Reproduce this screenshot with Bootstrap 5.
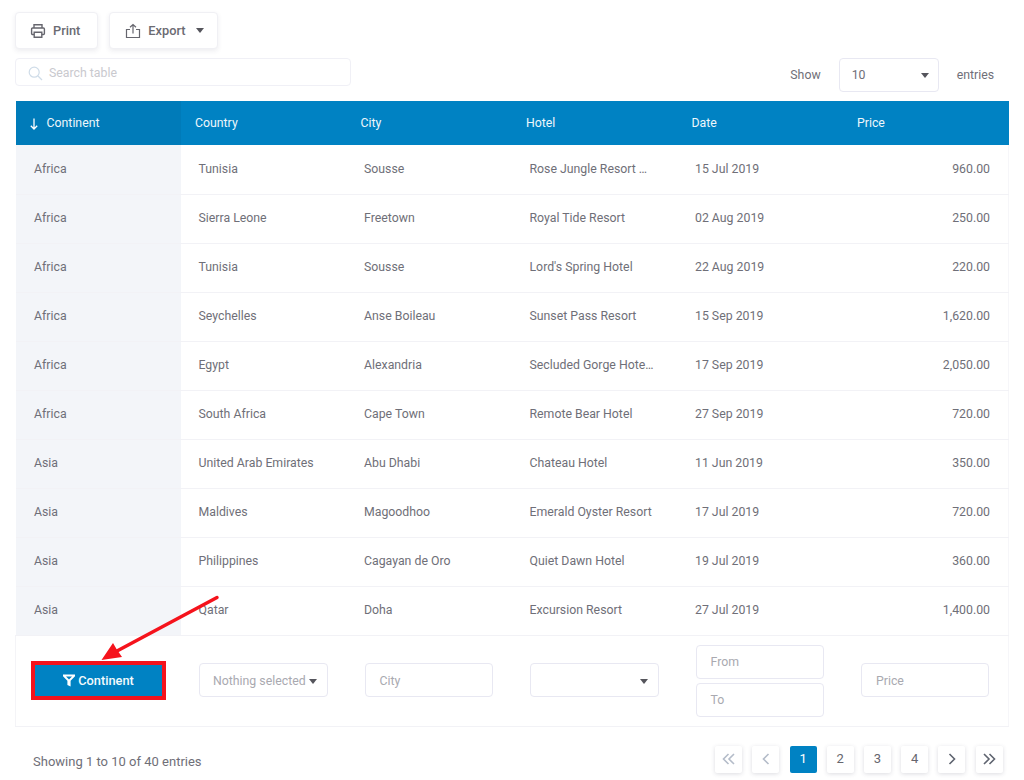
<!DOCTYPE html>
<html lang="en">
<head>
<meta charset="utf-8">
<title>Hotels</title>
<link href="https://cdn.jsdelivr.net/npm/bootstrap@5.3.0/dist/css/bootstrap.min.css" rel="stylesheet">
<style>
html,body{height:780px;overflow:hidden}
body{font-family:Roboto,"Liberation Sans",sans-serif;font-size:12.3px;color:#6f6f78;background:#fff;position:relative}
.page-wrap{padding:12px 15px 0}
.tool-row{gap:11px;height:37px}
.tool-btn{height:37px;background:#fff;border:1px solid #f0f0f4;border-radius:4px;box-shadow:0 2px 5px rgba(60,60,90,.09);color:#6b6b72;font-weight:500;font-size:12.8px;padding:0 17px 0 14px;gap:7px}
.tool-export{padding:0 13px 0 15px}
.caret-mark{width:0;height:0;border-left:4.5px solid transparent;border-right:4.5px solid transparent;border-top:5px solid #55555c}
.caret-gap{margin-left:3px}
.search-row{height:43px;margin-top:9px}
.search-box{width:336px;height:28px;border:1px solid #f0f0f6;border-radius:4px;padding:2px 0 0 12px;gap:6px;color:#c9c9ce}
.len-wrap{padding-right:15px;gap:18px}
.len-select{width:100px;height:34px;border:1px solid #e8e8f2;border-radius:4px;padding:0 9px 0 12px;color:#6f6f78}
.grid-table{width:994px;table-layout:fixed;border-collapse:collapse;margin:0}
.grid-table th{height:44px;background:#0082c3;color:#eef7fc;font-weight:400;padding:0 0 0 14px;border:0;vertical-align:middle}
.grid-table th.sorted-col{background:#007bb9}
.sort-arrow{margin-right:6px}
.grid-table td{height:49px;padding:0 18px 0 17.500px;border-bottom:1px solid #f2f2f6;vertical-align:middle;color:#6f6f78;white-space:nowrap;background:#fff}
.grid-table td.sorted-cell{background:#f3f5f9;padding-left:18.500px}
.grid-table td:last-child{border-right:1px solid #f6f6f9}
.grid-table tfoot td{height:91px;border-bottom:1px solid #f2f2f6;padding:0 19px 0 18px}
.grid-table tfoot td:first-child{border-left:1px solid #f4f4f7}
.flt-input{height:34px;border:1px solid #e8e8f2;border-radius:4px;padding:1px 14px 0;color:#a9a9b0;background:#fff}
.flt-single{margin-top:-1px;padding-top:2px}
.flt-pick{padding:2px 10px 0 13px}
.flt-stack{gap:4px}
.flt-btn{height:31px;width:127px;background:#0082c3;color:#f3fafd;font-weight:500;font-size:12.8px;gap:3px;outline:4px solid #f5131c;margin-left:1px}
.pager-row{padding:19px 0 0 18px;height:54px}
.pager-note{font-size:13px;padding-top:6px}
.pg-item{width:27px;height:27px;background:#fff;border-radius:2px;box-shadow:0 1px 4px rgba(60,60,90,.18);color:#66666e;font-size:13px}
.pg-item.is-active{background:#0082c3;color:#fff;box-shadow:none}
.pg-set{gap:10.200px;padding-right:6.500px}
.callout-arrow{position:absolute;left:95px;top:594px;pointer-events:none}
</style>
</head>
<body>
<div class="page-wrap">
  <div class="d-flex tool-row">
    <div class="tool-btn d-flex align-items-center">
      <svg width="16" height="16" viewBox="0 0 16 16" fill="none" stroke="#66666e" stroke-width="1.4"><path d="M4 5V1.7h8V5M4 11.5H2.6a1 1 0 0 1-1-1V6a1 1 0 0 1 1-1h10.800a1 1 0 0 1 1 1v4.500a1 1 0 0 1-1 1H12"/><path d="M4.200 9.200h7.600v5H4.200z"/></svg>
      <span>Print</span>
    </div>
    <div class="tool-btn tool-export d-flex align-items-center">
      <svg width="16" height="16" viewBox="0 0 16 16" fill="none" stroke="#66666e" stroke-width="1.2"><path d="M8 10.500V1.500M5 4.300 8 1.500l3 2.800M5 6.500H1.500v8h13v-8H11"/></svg>
      <span>Export</span>
      <span class="caret-mark caret-gap"></span>
    </div>
  </div>
  <div class="d-flex justify-content-between search-row">
    <div class="search-box d-flex align-items-center">
      <svg width="15" height="15" viewBox="0 0 15 15" fill="none" stroke="#cfdce8" stroke-width="1.200"><circle cx="6.200" cy="6.200" r="5"/><path d="m10 10 4 4"/></svg>
      <span>Search table</span>
    </div>
    <div class="len-wrap d-flex align-items-start">
      <span class="mt-2">Show</span>
      <div class="len-select d-flex align-items-center justify-content-between"><span>10</span><span class="caret-mark"></span></div>
      <span class="mt-2">entries</span>
    </div>
  </div>
  <table class="grid-table">
    <thead>
      <tr>
        <th class="sorted-col"><svg class="sort-arrow" width="8" height="12" viewBox="0 0 8 12" fill="none" stroke="#fff" stroke-width="1.300"><path d="M4 .5v10.500M.8 7.800 4 11l3.200-3.200"/></svg> Continent</th>
        <th>Country</th><th>City</th><th>Hotel</th><th>Date</th><th>Price</th>
      </tr>
    </thead>
    <tbody>
      <tr><td class="sorted-cell">Africa</td><td>Tunisia</td><td>Sousse</td><td>Rose Jungle Resort …</td><td>15 Jul 2019</td><td class="text-end">960.00</td></tr>
      <tr><td class="sorted-cell">Africa</td><td>Sierra Leone</td><td>Freetown</td><td>Royal Tide Resort</td><td>02 Aug 2019</td><td class="text-end">250.00</td></tr>
      <tr><td class="sorted-cell">Africa</td><td>Tunisia</td><td>Sousse</td><td>Lord's Spring Hotel</td><td>22 Aug 2019</td><td class="text-end">220.00</td></tr>
      <tr><td class="sorted-cell">Africa</td><td>Seychelles</td><td>Anse Boileau</td><td>Sunset Pass Resort</td><td>15 Sep 2019</td><td class="text-end">1,620.00</td></tr>
      <tr><td class="sorted-cell">Africa</td><td>Egypt</td><td>Alexandria</td><td>Secluded Gorge Hote…</td><td>17 Sep 2019</td><td class="text-end">2,050.00</td></tr>
      <tr><td class="sorted-cell">Africa</td><td>South Africa</td><td>Cape Town</td><td>Remote Bear Hotel</td><td>27 Sep 2019</td><td class="text-end">720.00</td></tr>
      <tr><td class="sorted-cell">Asia</td><td>United Arab Emirates</td><td>Abu Dhabi</td><td>Chateau Hotel</td><td>11 Jun 2019</td><td class="text-end">350.00</td></tr>
      <tr><td class="sorted-cell">Asia</td><td>Maldives</td><td>Magoodhoo</td><td>Emerald Oyster Resort</td><td>17 Jul 2019</td><td class="text-end">720.00</td></tr>
      <tr><td class="sorted-cell">Asia</td><td>Philippines</td><td>Cagayan de Oro</td><td>Quiet Dawn Hotel</td><td>19 Jul 2019</td><td class="text-end">360.00</td></tr>
      <tr><td class="sorted-cell">Asia</td><td>Qatar</td><td>Doha</td><td>Excursion Resort</td><td>27 Jul 2019</td><td class="text-end">1,400.00</td></tr>
    </tbody>
    <tfoot>
      <tr>
        <td>
          <div class="flt-btn d-flex align-items-center justify-content-center">
            <svg width="12" height="13" viewBox="0 0 12 13" fill="#fff" fill-rule="evenodd"><path d="M0 .5h12v1.700L7.600 6.800v5.700L4.400 11V6.800L0 2.200zM3 2.500h6L6 5.500z"/></svg>
            <span>Continent</span>
          </div>
        </td>
        <td><div class="flt-input flt-single flt-pick d-flex align-items-center justify-content-between"><span>Nothing selected</span><span class="caret-mark"></span></div></td>
        <td><div class="flt-input flt-single d-flex align-items-center">City</div></td>
        <td><div class="flt-input flt-single flt-pick d-flex align-items-center justify-content-end"><span class="caret-mark"></span></div></td>
        <td>
          <div class="d-flex flex-column flt-stack">
            <div class="flt-input d-flex align-items-center">From</div>
            <div class="flt-input d-flex align-items-center">To</div>
          </div>
        </td>
        <td><div class="flt-input flt-single d-flex align-items-center">Price</div></td>
      </tr>
    </tfoot>
  </table>
  <div class="d-flex justify-content-between pager-row">
    <span class="pager-note">Showing 1 to 10 of 40 entries</span>
    <div class="d-flex pg-set">
      <div class="pg-item d-flex align-items-center justify-content-center"><svg width="14" height="12" viewBox="0 0 14 12" fill="none" stroke="#b4bcc9" stroke-width="1.600"><path d="M6.500 1 1.500 6l5 5M12 1 7 6l5 5"/></svg></div>
      <div class="pg-item d-flex align-items-center justify-content-center"><svg width="8" height="12" viewBox="0 0 8 12" fill="none" stroke="#b4bcc9" stroke-width="1.600"><path d="M6.500 1 1.500 6l5 5"/></svg></div>
      <div class="pg-item is-active d-flex align-items-center justify-content-center">1</div>
      <div class="pg-item d-flex align-items-center justify-content-center">2</div>
      <div class="pg-item d-flex align-items-center justify-content-center">3</div>
      <div class="pg-item d-flex align-items-center justify-content-center">4</div>
      <div class="pg-item d-flex align-items-center justify-content-center"><svg width="8" height="12" viewBox="0 0 8 12" fill="none" stroke="#5f6470" stroke-width="1.600"><path d="m1.500 1 5 5-5 5"/></svg></div>
      <div class="pg-item d-flex align-items-center justify-content-center"><svg width="14" height="12" viewBox="0 0 14 12" fill="none" stroke="#5f6470" stroke-width="1.600"><path d="m2 1 5 5-5 5M7.500 1l5 5-5 5"/></svg></div>
    </div>
  </div>
</div>
<svg class="callout-arrow" width="130" height="70" viewBox="0 0 130 70"><path d="M122 3.500 22 57" stroke="#f5131c" stroke-width="3.500" stroke-linecap="round" fill="none"/><path d="M6.500 66 18 49l3.500 6 5.500 8z" fill="#f5131c"/></svg>
<script src="https://cdn.jsdelivr.net/npm/bootstrap@5.3.0/dist/js/bootstrap.bundle.min.js"></script>
</body>
</html>
